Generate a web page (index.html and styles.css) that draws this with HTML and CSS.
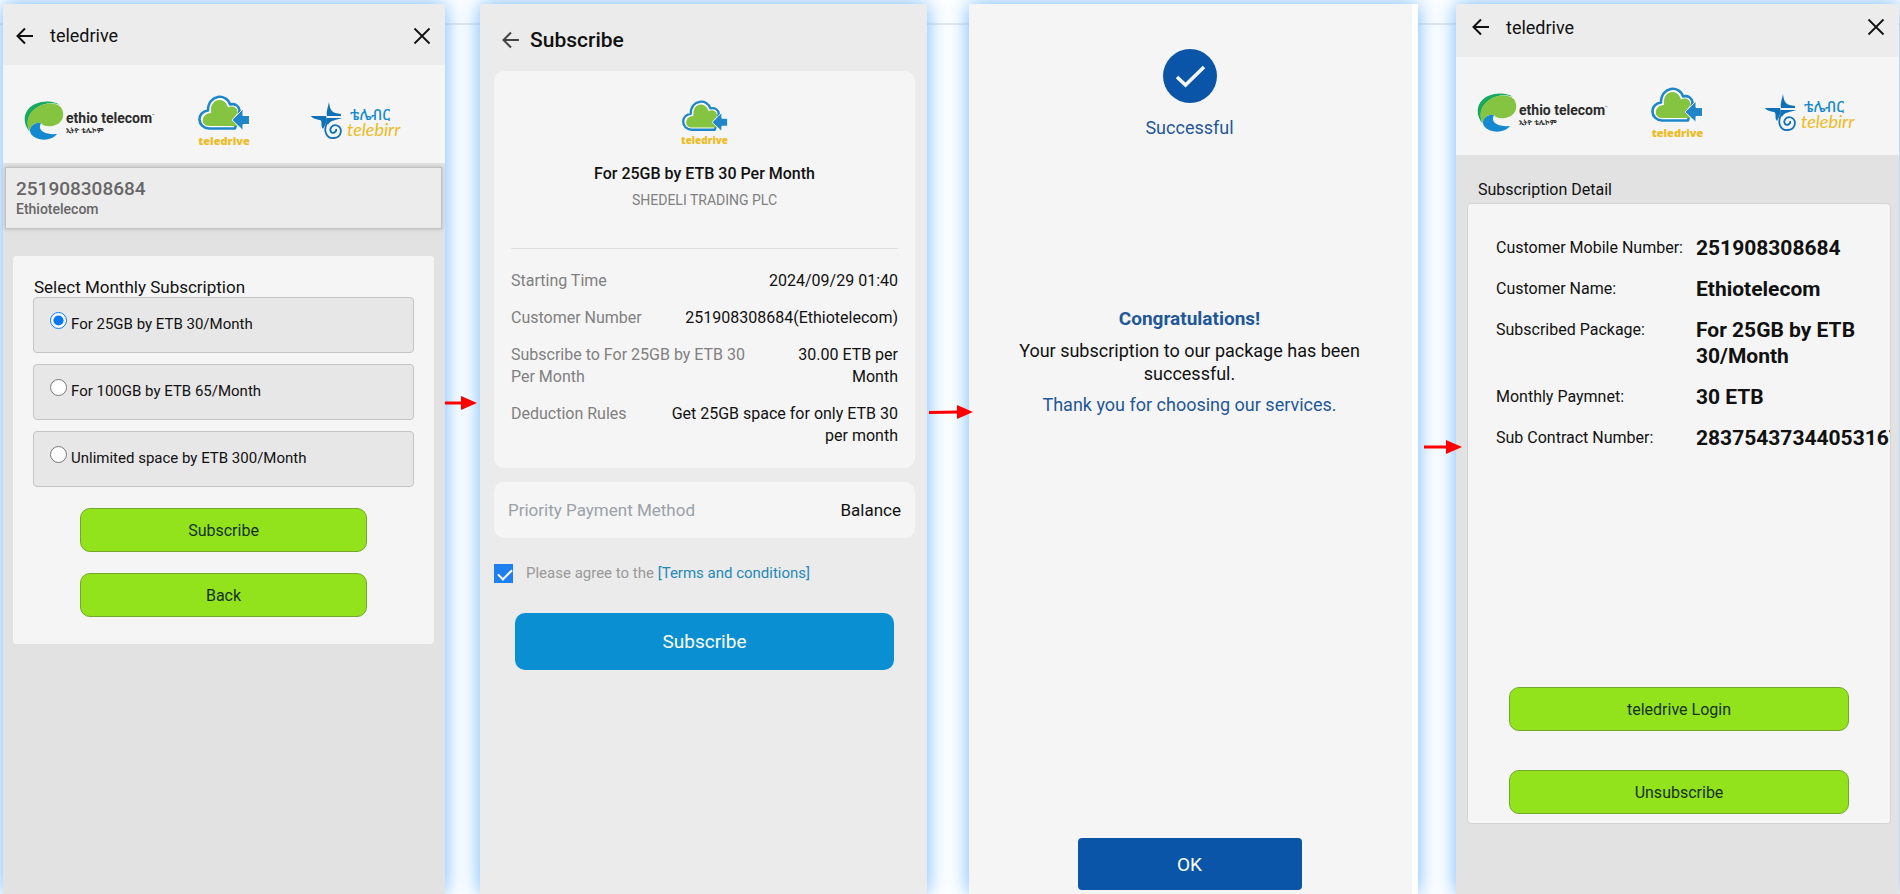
FILE: index.html
```html
<!DOCTYPE html>
<html lang="en">
<head>
  <meta charset="UTF-8">
  <meta name="viewport" content="width=device-width, initial-scale=1">
  <title>teledrive subscription</title>
  <link rel="stylesheet" href="styles.css">
</head>
<body>
  <!-- shared icons and logos -->
  <svg class="sprite" aria-hidden="true">
    <symbol id="icon-back" viewBox="0 0 18 18">
      <path d="M17 9H2M9 1.5L1.5 9L9 16.500" fill="none" stroke="currentColor" stroke-width="2"/>
    </symbol>
    <symbol id="icon-close" viewBox="0 0 18 18">
      <path d="M1.500 1.500L16.500 16.500M16.500 1.500L1.500 16.500" fill="none" stroke="currentColor" stroke-width="1.800"/>
    </symbol>
    <symbol id="logo-ethio" viewBox="0 0 132 40">
      <path d="M6 31C-3 21 0 8 11 3C20-1 31 0 36 4C29 1 18 2 11 8C3 15 2 23 6 31Z" fill="#18a861"/>
      <path d="M6 30C1 22 4 12 12 7C21 1 34 1 38 8C42 17 36 24 28 25C22 26 18 24 17 22C11 21 7 24 6 30Z" fill="#84c441"/>
      <path d="M6 29C7 24 12 21 17 22C13 29 20 34 33 33C27 41 12 40 7 33C6 31 6 30 6 29Z" fill="#1489cf"/>
      <text class="logo-ethio-name" x="42" y="22">ethio telecom</text>
      <text class="logo-ethio-sub" x="42" y="32">ኢትዮ ቴሌኮም</text>
      <text class="logo-ethio-tm" x="128" y="16">™</text>
    </symbol>
    <symbol id="logo-cloud" viewBox="0 0 52 36">
      <path d="M11 33.500C-1 33-2 17 10 15.500C10-1 29-2 32 9.500C37 8 41 11 41.500 15.500L37 33.500Z" fill="#fff" stroke="#1f86c9" stroke-width="2.600" stroke-linejoin="round"/>
      <path d="M11 31C2 31 3 18 13 18C11 3 27 1 30 12.500C35 10 40 13 39.500 18L35 24L41 31Z" fill="#84c441"/>
      <path d="M34 25L45 14V20.500H51.500V29.500H45V35.500Z" fill="#1f86c9" stroke="#fff" stroke-width="1"/>
    </symbol>
    <symbol id="logo-telebirr" viewBox="0 0 94 40">
      <path d="M18 1C19 10 21 12 30 13V15H16C15 11 17 6 18 1Z" fill="#0f71b8"/>
      <path d="M0 15H15C17 20 14 24 12 28C9 25 12 20 9 19C5 18 2 18 0 15Z" fill="#0f71b8"/>
      <path d="M15.500 17H31C26 19 19 19 17 24C15 22 15 19 15.500 17Z" fill="#0f71b8"/>
      <path d="M17 20C11 30 16 38 23 37C31 36 32 27 26 24.500C21 23 18 28 20 31C22 33 26 31 25 28" fill="none" stroke="#0f71b8" stroke-width="1.800"/>
      <text class="logo-birr-am" x="39" y="19">ቴሌብር</text>
      <text class="logo-birr-name" x="36" y="35">telebirr</text>
    </symbol>
  </svg>

  <main class="flow">
    <!-- 1. choose a package -->
    <section class="screen screen-select">
      <header class="topbar">
        <button class="icon-btn" type="button" aria-label="Back"><svg><use href="#icon-back"/></svg></button>
        <h1>teledrive</h1>
        <button class="icon-btn" type="button" aria-label="Close"><svg><use href="#icon-close"/></svg></button>
      </header>
      <div class="brands">
        <svg class="ethio"><use href="#logo-ethio"/></svg>
        <div class="drive"><svg><use href="#logo-cloud"/></svg><span>teledrive</span></div>
        <svg class="birr"><use href="#logo-telebirr"/></svg>
      </div>
      <div class="account">
        <strong>251908308684</strong>
        <span>Ethiotelecom</span>
      </div>
      <form class="card plans">
        <h2>Select Monthly Subscription</h2>
        <label class="plan"><input type="radio" name="plan" checked><span>For 25GB by ETB 30/Month</span></label>
        <label class="plan"><input type="radio" name="plan"><span>For 100GB by ETB 65/Month</span></label>
        <label class="plan"><input type="radio" name="plan"><span>Unlimited space by ETB 300/Month</span></label>
        <button class="btn-green" type="button">Subscribe</button>
        <button class="btn-green" type="button">Back</button>
      </form>
    </section>

    <div class="step step-one">
      <svg width="32" height="14" viewBox="0 0 32 14"><path d="M0 7H18" stroke="#f00" stroke-width="3"/><path d="M16 0L32 7L16 14Z" fill="#f00"/></svg>
    </div>

    <!-- 2. confirm -->
    <section class="screen screen-confirm">
      <header class="topbar">
        <button class="icon-btn" type="button" aria-label="Back"><svg><use href="#icon-back"/></svg></button>
        <h1>Subscribe</h1>
      </header>
      <div class="card summary">
        <div class="drive"><svg><use href="#logo-cloud"/></svg><span>teledrive</span></div>
        <h2>For 25GB by ETB 30 Per Month</h2>
        <p class="merchant">SHEDELI TRADING PLC</p>
        <dl>
          <div><dt>Starting Time</dt><dd>2024/09/29 01:40</dd></div>
          <div><dt>Customer Number</dt><dd>251908308684(Ethiotelecom)</dd></div>
          <div><dt>Subscribe to For 25GB by ETB 30 Per Month</dt><dd>30.00 ETB per Month</dd></div>
          <div><dt>Deduction Rules</dt><dd>Get 25GB space for only ETB 30 per month</dd></div>
        </dl>
      </div>
      <div class="card payment"><span>Priority Payment Method</span><span>Balance</span></div>
      <div class="terms">
        <input type="checkbox" id="agree" checked>
        <label for="agree">Please agree to the <a href="#terms">[Terms and conditions]</a></label>
      </div>
      <button class="btn-blue" type="button">Subscribe</button>
    </section>

    <div class="step step-two">
      <svg width="44" height="14" viewBox="0 0 44 14"><path d="M0 7.500L30 7" stroke="#f00" stroke-width="3"/><path d="M28 0L44 7L28 14Z" fill="#f00"/></svg>
    </div>

    <!-- 3. success -->
    <section class="screen screen-success">
      <svg class="tick" viewBox="0 0 54 54">
        <circle cx="27" cy="27" r="27" fill="#0a55a8"/>
        <path d="M14 28L22.500 36L41 18" fill="none" stroke="#f5f5f5" stroke-width="3.500"/>
      </svg>
      <h1>Successful</h1>
      <div class="message">
        <h2>Congratulations!</h2>
        <p>Your subscription to our package has been successful.</p>
        <p class="thanks">Thank you for choosing our services.</p>
      </div>
      <button class="btn-ok" type="button">OK</button>
    </section>

    <div class="step step-three">
      <svg width="38" height="14" viewBox="0 0 38 14"><path d="M0 7H24" stroke="#f00" stroke-width="3"/><path d="M22 0L38 7L22 14Z" fill="#f00"/></svg>
    </div>

    <!-- 4. subscription detail -->
    <section class="screen screen-detail">
      <header class="topbar">
        <button class="icon-btn" type="button" aria-label="Back"><svg><use href="#icon-back"/></svg></button>
        <h1>teledrive</h1>
        <button class="icon-btn" type="button" aria-label="Close"><svg><use href="#icon-close"/></svg></button>
      </header>
      <div class="brands">
        <svg class="ethio"><use href="#logo-ethio"/></svg>
        <div class="drive"><svg><use href="#logo-cloud"/></svg><span>teledrive</span></div>
        <svg class="birr"><use href="#logo-telebirr"/></svg>
      </div>
      <h2>Subscription Detail</h2>
      <div class="card detail">
        <dl>
          <dt>Customer Mobile Number:</dt><dd>251908308684</dd>
          <dt>Customer Name:</dt><dd>Ethiotelecom</dd>
          <dt>Subscribed Package:</dt><dd>For 25GB by ETB 30/Month</dd>
          <dt>Monthly Paymnet:</dt><dd>30 ETB</dd>
          <dt>Sub Contract Number:</dt><dd>28375437344053167</dd>
        </dl>
        <button class="btn-green" type="button">teledrive Login</button>
        <button class="btn-green" type="button">Unsubscribe</button>
      </div>
    </section>
  </main>
</body>
</html>
```
FILE: styles.css
```css
* {
  box-sizing: border-box;
  margin: 0;
  padding: 0;
}
body {
  font-family: Roboto, "Noto Sans", sans-serif;
  font-size: 16px;
  color: #111;
  background: #fff;
}
button, input {
  font-family: inherit;
}
.sprite {
  position: absolute;
  width: 0;
  height: 0;
}

/* row of phone screens */
.flow {
  display: grid;
  grid-template-columns: 442fr 35px 447fr 42px 449fr 38px 443fr;
  min-height: 100vh;
  padding: 4px 1px 0 3px;
  overflow: hidden;
  background: linear-gradient(#e6e9ed, #e6e9ed) 0 23px / 100% 2px no-repeat;
}
.screen {
  display: flex;
  flex-direction: column;
  min-width: 0;
  background: #e2e2e2;
  box-shadow: 0 0 20px #6cb6ff;
}
.screen-confirm {
  background: #ebebeb;
}

.step {
  position: relative;
  z-index: 1;
}
.step svg {
  position: absolute;
  left: 0;
}
.step-one svg { top: 44%; }
.step-two svg { top: 45%; left: 2px; }
.step-three svg { top: 49%; left: 6px; }

/* top bar */
.topbar {
  display: flex;
  align-items: center;
  height: 61px;
  padding: 2px 14px 0 13px;
  background: #ececec;
}
.topbar h1 {
  flex: 1;
  margin-left: 16px;
  font-size: 18px;
  font-weight: 400;
}
.icon-btn {
  width: 18px;
  height: 18px;
  border: none;
  background: none;
  color: #111;
}
.icon-btn svg {
  display: block;
  width: 18px;
  height: 18px;
}

/* logos */
.brands {
  display: grid;
  grid-template-columns: repeat(3, 1fr);
  align-items: center;
  justify-items: center;
  height: 98px;
  padding: 14px 20px 0;
  background: #f5f5f5;
}
.ethio {
  width: 132px;
  height: 40px;
}
.birr {
  width: 94px;
  height: 40px;
}
.drive {
  display: flex;
  flex-direction: column;
  align-items: center;
  font: 800 11px/14px "Open Sans", sans-serif;
  color: #eebb22;
}
.drive svg {
  width: 52px;
  height: 36px;
  margin-bottom: 3px;
}
.logo-ethio-name {
  font: bold 14px Roboto, sans-serif;
  fill: #2b2b2b;
}
.logo-ethio-sub {
  font: bold 7px "Noto Sans Ethiopic", "Noto Sans", sans-serif;
  fill: #2b2b2b;
}
.logo-ethio-tm {
  font: 4px Roboto, sans-serif;
  fill: #2b2b2b;
}
.logo-birr-am {
  font: 500 15px "Noto Sans Ethiopic", "Noto Sans", sans-serif;
  fill: #1489cf;
}
.logo-birr-name {
  font: italic 400 18px Lato, sans-serif;
  fill: #eebb22;
}

.card {
  background: #f5f5f5;
}

/* screen 1 */
.account {
  display: flex;
  flex-direction: column;
  margin: 4px 3px 0 2px;
  padding: 10px;
  border: 1px solid #c2c2c2;
  background: #ececec;
  box-shadow: 0 0 4px rgba(0, 0, 0, 0.2);
  color: #666;
}
.account strong {
  font-size: 19px;
  line-height: 22px;
  font-weight: 500;
}
.account span {
  font-size: 14px;
  line-height: 18px;
  font-weight: 500;
}
.plans {
  display: flex;
  flex-direction: column;
  margin: 27px 11px 0 10px;
  padding: 21px 20px 27px;
  border-radius: 4px;
}
.plans h2 {
  font-size: 17px;
  line-height: 20px;
  font-weight: 400;
  padding-left: 1px;
}
.plan {
  display: flex;
  align-items: flex-start;
  height: 56px;
  margin-bottom: 11px;
  padding: 14px 16px;
  border: 1px solid #c4c4c4;
  border-radius: 4px;
  background: #e7e7e7;
  font-size: 15px;
  line-height: 24px;
}
.plan input {
  width: 17px;
  height: 17px;
  margin-right: 4px;
  accent-color: #0a78f5;
}
.btn-green {
  height: 44px;
  border: 1px solid #74a82c;
  border-radius: 10px;
  background: #92e31b;
  color: #16301a;
  font-size: 16px;
}
.plans .btn-green {
  margin: 10px 47px 11px;
}
.plans .btn-green:last-child {
  margin-bottom: 0;
}

/* screen 2 */
.screen-confirm .topbar {
  height: 67px;
  padding: 5px 22px 0;
  background: none;
}
.screen-confirm .topbar h1 {
  margin-left: 10px;
  font-size: 21px;
  font-weight: 500;
}
.screen-confirm .icon-btn {
  color: #444;
}
.summary {
  margin: 0 12px 0 14px;
  padding: 29px 17px 6px;
  border-radius: 10px;
  text-align: center;
}
.summary .drive {
  font-size: 10px;
}
.summary .drive svg {
  width: 50px;
  height: 32px;
  margin-bottom: 1px;
}
.summary h2 {
  margin-top: 17px;
  font-size: 16px;
  line-height: 20px;
  font-weight: 500;
}
.merchant {
  margin-top: 7px;
  font-size: 14px;
  line-height: 18px;
  color: #808080;
}
.summary dl {
  margin-top: 39px;
  padding-top: 21px;
  border-top: 1px solid #dedede;
}
.summary dl div {
  display: flex;
  justify-content: space-between;
  gap: 20px;
  margin-bottom: 15px;
  font-size: 16px;
  line-height: 22px;
}
.summary dt {
  flex: none;
  max-width: 250px;
  text-align: left;
  color: #808080;
}
.summary dd {
  text-align: right;
}
.payment {
  display: flex;
  align-items: center;
  justify-content: space-between;
  height: 56px;
  margin: 14px 12px 0 14px;
  padding: 0 14px;
  border-radius: 10px;
  font-size: 17px;
}
.payment span:first-child {
  color: #9ba1a8;
}
.terms {
  display: flex;
  align-items: center;
  margin: 25px 14px 0;
  font-size: 15px;
  line-height: 20px;
  color: #999;
}
.terms input {
  appearance: none;
  width: 19px;
  height: 19px;
  margin-right: 13px;
  background: #1e80ef;
}
.terms input:checked::before {
  content: "";
  display: block;
  width: 12px;
  height: 6px;
  margin: 5px 0 0 4px;
  border: solid #fff;
  border-width: 0 0 2px 2px;
  transform: rotate(-45deg);
}
.terms a {
  color: #2389b8;
  text-decoration: none;
}
.btn-blue {
  height: 57px;
  margin: 30px 33px 0 35px;
  border: none;
  border-radius: 10px;
  background: #0a8fd2;
  color: #fff;
  font-size: 19px;
}

/* screen 3 */
.screen-success {
  align-items: center;
  padding: 45px 2px 4px 0;
  border-right: 6px solid #fff;
  background: #f5f5f5;
  color: #1f5799;
}
.tick {
  width: 54px;
  height: 54px;
}
.screen-success h1 {
  margin-top: 13px;
  font-size: 18px;
  line-height: 24px;
  font-weight: 400;
}
.message {
  max-width: 360px;
  margin-top: 167px;
  font-size: 18px;
  line-height: 23px;
  text-align: center;
}
.message h2 {
  font-size: 19px;
  line-height: 24px;
  font-weight: 700;
}
.message p {
  margin-top: 8px;
  color: #111;
}
.message .thanks {
  color: #1f5799;
}
.btn-ok {
  width: 224px;
  height: 52px;
  margin-top: auto;
  border: none;
  border-radius: 4px;
  background: #0a55a8;
  color: #fff;
  font-size: 19px;
}

/* screen 4 */
.screen-detail .topbar {
  height: 53px;
  padding: 0 14px 7px 16px;
}
.screen-detail h2 {
  margin: 25px 22px 3px;
  font-size: 16px;
  line-height: 20px;
  font-weight: 400;
}
.detail {
  display: flex;
  flex-direction: column;
  min-height: 621px;
  margin: 0 8px 0 11px;
  padding: 31px 0 9px 28px;
  border: 1px solid #d4d4d4;
  border-radius: 4px;
  overflow: hidden;
}
.detail dl {
  display: grid;
  grid-template-columns: 188px 1fr;
  column-gap: 12px;
  row-gap: 15px;
  line-height: 26px;
  margin-bottom: auto;
}
.detail dt {
  font-size: 16px;
}
.detail dd {
  min-width: 0;
  font-size: 21px;
  font-weight: 700;
}
.detail .btn-green {
  margin: 0 41px 0 13px;
}
.detail .btn-green + .btn-green {
  margin-top: 39px;
}
```
